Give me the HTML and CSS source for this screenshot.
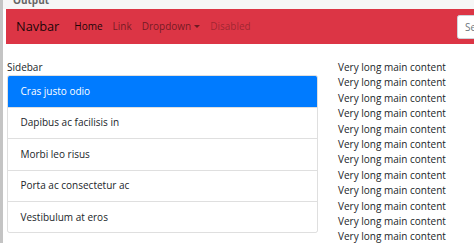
FILE: index.html
```html
<!DOCTYPE html>
<html lang="en">
<head>
    <meta charset="UTF-8">
    <meta name="viewport" content="width=device-width, initial-scale=1.0">
    <title>Output</title>
    <link rel="stylesheet" href="styles.css">
</head>
<body>
    <div class="frame">
        <div class="frame-head"><span>Output</span></div>
        <div class="page">
            <nav class="navbar">
                <a class="navbar-brand" href="#">Navbar</a>
                <ul class="navbar-nav">
                    <li><a class="nav-link active" href="#">Home</a></li>
                    <li><a class="nav-link" href="#">Link</a></li>
                    <li><a class="nav-link dropdown-toggle" href="#">Dropdown</a></li>
                    <li><a class="nav-link disabled" href="#">Disabled</a></li>
                </ul>
                <form class="search-form">
                    <input type="search" class="search-input" placeholder="Search">
                </form>
            </nav>

            <div class="layout">
                <aside class="sidebar">
                    Sidebar
                    <div class="list-group">
                        <a href="#" class="list-item active">Cras justo odio</a>
                        <a href="#" class="list-item">Dapibus ac facilisis in</a>
                        <a href="#" class="list-item">Morbi leo risus</a>
                        <a href="#" class="list-item">Porta ac consectetur ac</a>
                        <a href="#" class="list-item">Vestibulum at eros</a>
                    </div>
                </aside>
                <main class="main-content">
                    <div>Very long main content</div>
                    <div>Very long main content</div>
                    <div>Very long main content</div>
                    <div>Very long main content</div>
                    <div>Very long main content</div>
                    <div>Very long main content</div>
                    <div>Very long main content</div>
                    <div>Very long main content</div>
                    <div>Very long main content</div>
                    <div>Very long main content</div>
                    <div>Very long main content</div>
                    <div>Very long main content</div>
                    <div>Very long main content</div>
                    <div>Very long main content</div>
                </main>
            </div>
        </div>
    </div>
</body>
</html>
```

FILE: styles.css
```css
html, body {
    margin: 0;
    height: 100%;
    overflow: hidden;
}
body {
    font-family: "Open Sans", "Noto Sans", Arial, sans-serif;
    font-size: 10px;
    line-height: 15.4px;
    color: #212529;
    background: #fff;
}
a {
    text-decoration: none;
}
.frame {
    border-left: 3px solid #c4c4c4;
    height: 100%;
    width: 700px;
}
.frame-head {
    height: 9px;
    overflow: hidden;
    background: #f6f6f6;
}
.frame-head span {
    display: block;
    margin-top: -7px;
    padding-left: 10px;
    font-weight: bold;
    color: #666;
}
.page {
    padding-left: 3px;
}
.navbar {
    display: flex;
    align-items: center;
    background: #dc3545;
    padding: 5px 10px;
    height: 25px;
}
.navbar-brand {
    font-size: 12.8px;
    line-height: 18.75px;
    padding: 3px 0;
    margin-right: 10px;
    color: rgba(0,0,0,0.9);
}
.navbar-nav {
    display: flex;
    list-style: none;
    margin: 0;
    padding: 0;
}
.nav-link {
    display: block;
    padding: 5px;
    line-height: 15px;
    color: rgba(0,0,0,0.5);
}
.nav-link.active {
    color: rgba(0,0,0,0.9);
}
.nav-link.disabled {
    color: rgba(0,0,0,0.3);
}
.dropdown-toggle::after {
    content: "";
    display: inline-block;
    margin-left: 3px;
    vertical-align: 2px;
    border-top: 3px solid;
    border-left: 3px solid transparent;
    border-right: 3px solid transparent;
}
.search-form {
    margin-left: auto;
}
.search-input {
    display: block;
    width: 236px;
    height: 24px;
    box-sizing: border-box;
    padding: 3px 7px;
    border: 1px solid #ced4da;
    border-radius: 2.5px;
    font-family: inherit;
    font-size: 10px;
    color: #495057;
    background: #fff;
}
.search-input::placeholder {
    color: #6c757d;
}
.layout {
    display: flex;
    margin-top: 16px;
    padding-left: 1px;
}
.sidebar {
    width: 311px;
    flex: 0 0 auto;
}
.list-group {
    border: 1px solid rgba(0,0,0,0.125);
    border-radius: 2.5px;
    overflow: hidden;
}
.list-item {
    display: block;
    padding: 7.5px 12.5px;
    color: #212529;
    border-top: 1px solid rgba(0,0,0,0.125);
}
.list-item:first-child {
    border-top: none;
}
.list-item.active {
    background: #007bff;
    color: #fff;
}
.main-content {
    margin-left: 20px;
}
```
